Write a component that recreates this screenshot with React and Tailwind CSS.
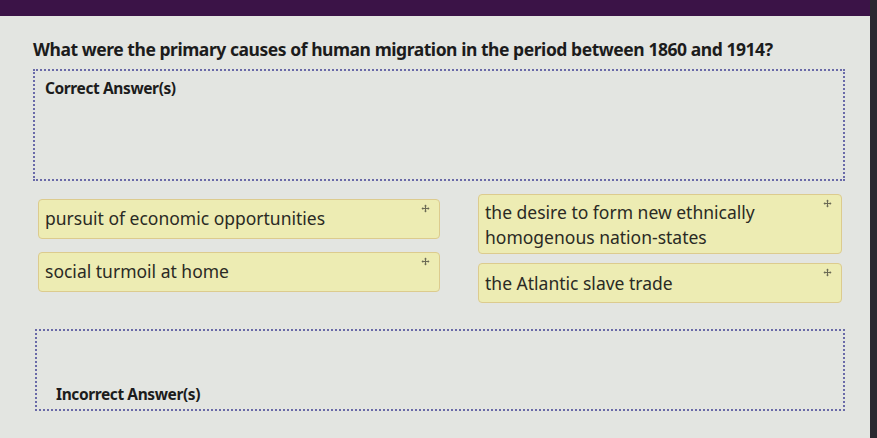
import React from 'react';

// small four-way move handle shown in the tile corner
const MoveIcon = () => (
  <svg width="9" height="9" viewBox="0 0 10 10" className="text-[#6b6a55]">
    <path d="M5 0.5 L6.6 2.4 H5.6 V4.4 H7.6 V3.4 L9.5 5 L7.6 6.6 V5.6 H5.6 V7.6 H6.6 L5 9.5 L3.4 7.6 H4.4 V5.6 H2.4 V6.6 L0.5 5 L2.4 3.4 V4.4 H4.4 V2.4 H3.4 Z" fill="currentColor" />
  </svg>
);

const Tile = ({ text, className }) => (
  <div className={`relative rounded-[4px] border border-[#dccb8e] bg-[#edecb3] pl-[6px] pr-6 ${className}`}>
    <span className="absolute right-[9px] top-[4px]"><MoveIcon /></span>
    <p className="text-[17.5px] leading-[25px] text-[#2a2a24]">{text}</p>
  </div>
);

const App = () => {
  return (
    <div className="relative h-[438px] w-[877px] overflow-hidden bg-[#e3e5e1] font-['Noto_Sans','Open_Sans',sans-serif]">
      <div className="h-[16px] bg-[#3b1347]" />
      <div className="absolute right-0 top-0 h-full w-[7px] bg-[#2a2830]" />

      <div className="pl-[33px] pr-[30px]">
        <h1 className="mt-[21px] text-[17.5px] font-bold leading-[24px] tracking-[-0.45px] text-[#1c1c1c]">
          What were the primary causes of human migration in the period between 1860 and 1914?
        </h1>

        <div className="mt-[8px] h-[112px] w-[812px] border-2 border-dotted border-[#6a6aa8] px-[10px] pt-[6px]">
          <p className="text-[15.5px] font-bold tracking-[-0.4px] text-[#1c1c1c]">Correct Answer(s)</p>
        </div>

        <div className="mt-[13px] flex gap-[38px] pl-[5px]">
          <div className="flex w-[402px] shrink-0 flex-col gap-[13px] pt-[5px]">
            <Tile text="pursuit of economic opportunities" className="h-[40px] pt-[6px]" />
            <Tile text="social turmoil at home" className="h-[40px] pt-[6px]" />
          </div>
          <div className="flex w-[364px] shrink-0 flex-col gap-[9px]">
            <Tile text="the desire to form new ethnically homogenous nation-states" className="h-[60px] pt-[5px]" />
            <Tile text="the Atlantic slave trade" className="h-[40px] pt-[7px]" />
          </div>
        </div>

        <div className="ml-[2px] mt-[26px] flex h-[82px] w-[810px] items-end border-2 border-dotted border-[#6a6aa8] px-[19px] pb-[3px]">
          <p className="text-[15.5px] font-bold tracking-[-0.4px] text-[#1c1c1c]">Incorrect Answer(s)</p>
        </div>
      </div>
    </div>
  );
};

export default App;
